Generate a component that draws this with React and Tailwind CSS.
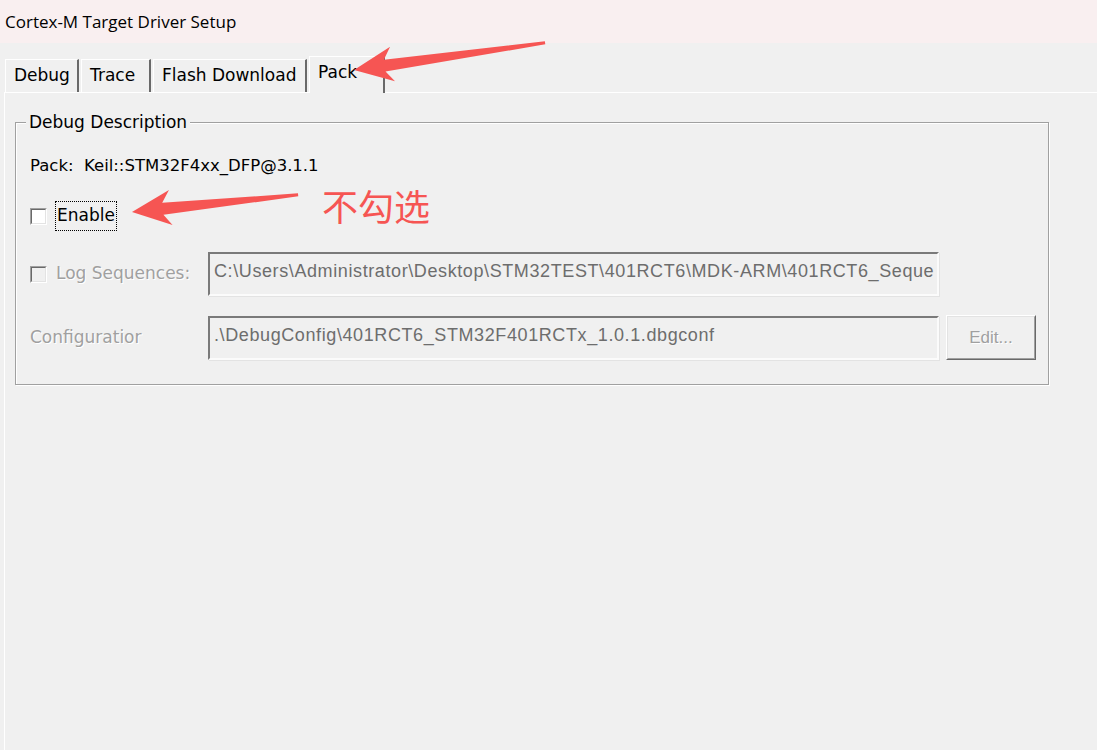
import React from "react";

const ui = { fontFamily: '"DejaVu Sans", "Noto Sans", sans-serif' };
const narrow = { fontFamily: '"Liberation Sans", Arial, sans-serif' };

function Tab({ label, width, active }) {
  return (
    <div
      className={
        "flex items-center border-l border-t border-white border-r-2 border-r-[#696969] bg-[#f0f0f0] text-[17px] text-black pl-[8px] " +
        (active ? "h-[37px] pb-[4px] -mb-px relative z-10" : "h-[33px] mr-[2px]")
      }
      style={{ ...ui, width }}
    >
      {label}
    </div>
  );
}

function CheckBox({ disabled }) {
  return (
    <div className="size-[17px] border border-t-[#a0a0a0] border-l-[#a0a0a0] border-r-white border-b-white">
      <div
        className={
          "size-full border border-t-[#696969] border-l-[#696969] border-r-[#e3e3e3] border-b-[#e3e3e3] " +
          (disabled ? "bg-[#f0f0f0]" : "bg-white")
        }
      />
    </div>
  );
}

function Field({ value }) {
  return (
    <div className="w-[731px] h-[44px] border-2 border-t-[#7a7a7a] border-l-[#7a7a7a] border-r-[#fbfbfb] border-b-[#fbfbfb] bg-[#f0f0f0] shadow-[1px_1px_0_#e3e3e3]">
      <div
        className="pl-[4px] pt-[6px] text-[18px] leading-[22px] text-[#6d6d6d] whitespace-nowrap tracking-[0.6px]"
        style={narrow}
      >
        {value}
      </div>
    </div>
  );
}

const dim = "text-[#a0a0a0] [text-shadow:1px_1px_0_#ffffff]";

export default function App() {
  return (
    <div className="relative w-[1097px] h-[750px] overflow-hidden bg-[#f0f0f0]">
      <div
        className="h-[43px] bg-[#f9eff0] pl-[5px] flex items-center text-[17px] text-black"
        style={{ fontFamily: '"Open Sans", "Noto Sans", sans-serif' }}
      >
        Cortex-M Target Driver Setup
      </div>

      <div className="pl-[4px] pt-[13px]">
        <div className="flex items-end pl-px">
          <Tab label="Debug" width={74} />
          <Tab label="Trace" width={70} />
          <Tab label="Flash Download" width={154} />
          <Tab label="Pack" width={76} active />
        </div>

        <div className="border-t border-l border-white h-[700px] pl-[10px] pt-[29px]">
          <div className="relative w-[1034px] h-[263px] border border-[#a0a0a0] shadow-[inset_1px_1px_0_#ffffff,1px_1px_0_#ffffff] pl-[14px] pr-[12px]">
            <div
              className="absolute -top-[12px] left-[10px] px-[3px] bg-[#f0f0f0] text-[17px] leading-[22px] text-black"
              style={ui}
            >
              Debug Description
            </div>

            <div className="pt-[32px] text-[16.5px] leading-[22px] text-black" style={ui}>
              Pack:&nbsp; Keil::STM32F4xx_DFP@3.1.1
            </div>

            <div className="mt-[24px] flex items-center gap-[8px]" style={ui}>
              <CheckBox />
              <div className="border border-dotted border-black px-px h-[30px] flex items-center text-[17px] text-black">
                Enable
              </div>
            </div>

            <div className="mt-[21px] flex items-center" style={ui}>
              <div className="w-[178px] flex items-center gap-[9px]">
                <CheckBox disabled />
                <span className={"text-[17px] " + dim}>Log Sequences:</span>
              </div>
              <Field value="C:\Users\Administrator\Desktop\STM32TEST\401RCT6\MDK-ARM\401RCT6_Seque" />
            </div>

            <div className="mt-[19px] flex items-center" style={ui}>
              <div className={"w-[178px] text-[17px] " + dim}>Configuratior</div>
              <Field value=".\DebugConfig\401RCT6_STM32F401RCTx_1.0.1.dbgconf" />
              <div className="ml-[7px] w-[90px] h-[45px] border border-t-white border-l-white border-r-[#696969] border-b-[#696969]">
                <div
                  className={"size-full flex items-center justify-center border border-t-[#e3e3e3] border-l-[#e3e3e3] border-r-[#a0a0a0] border-b-[#a0a0a0] text-[17px] " + dim}
                  style={narrow}
                >
                  Edit...
                </div>
              </div>
            </div>
          </div>
        </div>
      </div>

      {/* annotations drawn over the dialog */}
      <svg className="absolute inset-0 z-20 pointer-events-none" width="1097" height="750">
        <g transform="translate(354 70) rotate(-8.1)" fill="#f65553">
          <polygon points="0,0 39,-18 31,-6 193,-1.5 193,1.5 31,6 39,17" />
        </g>
        <g transform="translate(132 212) rotate(-5.9)" fill="#f65553">
          <polygon points="0,0 39,-18 31,-6 167,-1.5 167,1.5 31,6 39,17" />
        </g>
      </svg>
      <div
        className="absolute z-20 left-[322px] top-[183px] text-[36px] leading-[44px] text-[#f65553]"
        style={{ fontFamily: '"Noto Sans CJK SC", sans-serif' }}
      >
        不勾选
      </div>
    </div>
  );
}
